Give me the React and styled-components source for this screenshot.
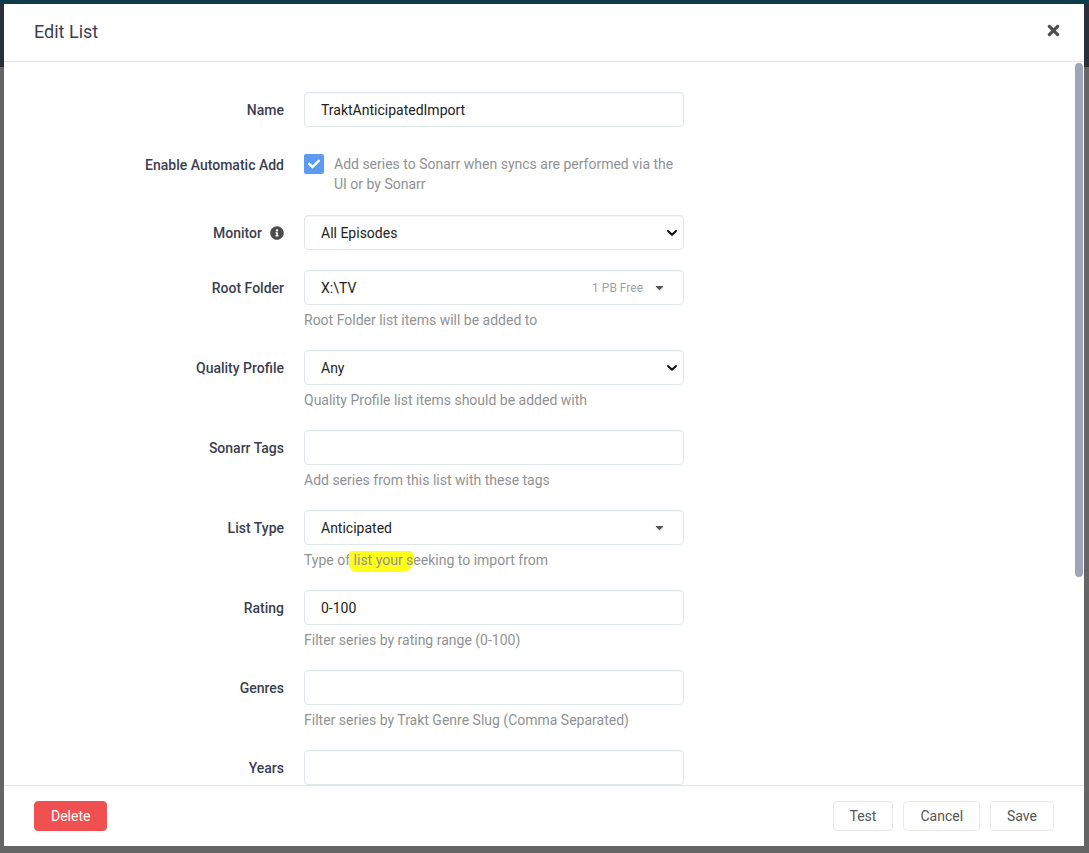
import React from 'react';
import styled, { createGlobalStyle } from 'styled-components';
import { FaTimes, FaInfoCircle, FaCaretDown, FaCheck } from 'react-icons/fa';

const GlobalStyle = createGlobalStyle`
  html, body {
    margin: 0;
    padding: 0;
    height: 100%;
  }
  body {
    font-family: Roboto, "Liberation Sans", sans-serif;
    font-size: 14px;
    color: #515253;
    background: #656565;
  }
  * {
    box-sizing: border-box;
  }
`;

const Page = styled.div`
  height: 100vh;
  background: #656565;
`;

const PageHeader = styled.div`
  height: 67px;
  background: #2a2e38;
  border-top: 4px solid #0e3c48;
`;

const Modal = styled.div`
  position: fixed;
  top: 4px;
  left: 4px;
  width: 1080px;
  height: 842px;
  display: flex;
  flex-direction: column;
  background: #fff;
`;

const ModalHeader = styled.div`
  display: flex;
  align-items: center;
  justify-content: space-between;
  height: 58px;
  padding-left: 30px;
  border-bottom: 1px solid #e5e5e5;
  flex: 0 0 auto;
`;

const Title = styled.h1`
  margin: 0;
  font-size: 18px;
  font-weight: 400;
  color: #3a3f51;
  padding-bottom: 2px;
`;

const CloseButton = styled.button`
  width: 62px;
  height: 57px;
  display: flex;
  align-items: center;
  justify-content: center;
  padding: 0 0 4px 0;
  border: 0;
  background: transparent;
  color: #4d4d4d;
  font-size: 17px;
  cursor: pointer;
`;

const BodyFrame = styled.div`
  position: relative;
  flex: 1 1 auto;
  min-height: 0;
`;

const ModalBody = styled.div`
  height: 100%;
  overflow: hidden;
  padding: 30px;
`;

/* the browser hides real scrollbars in screenshots, so the thumb is drawn over the body */
const ScrollThumb = styled.div`
  position: absolute;
  top: 1px;
  right: 1px;
  width: 8px;
  height: 514px;
  border-radius: 4px;
  background: #9ea4b9;
`;

const FormGroup = styled.div`
  display: flex;
  margin-bottom: 20px;
`;

const Label = styled.label`
  display: flex;
  align-items: center;
  justify-content: flex-end;
  flex: 0 0 250px;
  height: 35px;
  margin-right: 20px;
  font-weight: 500;
  color: #3a3f51;
`;

const InfoIcon = styled.span`
  display: inline-flex;
  margin-left: 8px;
  color: #4b4b4b;
  font-size: 14px;
`;

const InputGroup = styled.div`
  flex: 0 0 380px;
  width: 380px;
`;

const inputBox = `
  display: flex;
  align-items: center;
  width: 100%;
  height: 35px;
  padding: 0 16px;
  border: 1px solid #dde6e9;
  border-radius: 4px;
  background: #fff;
  box-shadow: inset 0 1px 1px rgba(0, 0, 0, 0.035);
  font-family: Roboto, "Liberation Sans", sans-serif;
  font-size: 14px;
  color: #222;
`;

const TextInput = styled.input`
  ${inputBox}
  outline: none;
`;

const SelectBox = styled.div`
  ${inputBox}
  justify-content: space-between;
  padding-right: ${(p) => (p.$enhanced ? '17px' : '5px')};
`;

const Hint = styled.span`
  margin-left: auto;
  margin-right: 10px;
  font-size: 12px;
  color: #a0a3a5;
`;

const Caret = styled.span`
  display: inline-flex;
  color: #555;
  font-size: 13px;
`;

const HelpText = styled.div`
  margin-top: 5px;
  line-height: 20px;
  color: #909293;
`;

const Highlight = styled.span`
  background: #ffff1a;
  margin-left: -5px;
  padding: 1px 0 4px 5px;
  border-radius: 3px 4px 10px 8px;
`;

const CheckRow = styled.div`
  display: flex;
  align-items: flex-start;
  padding: 7px 0 1px;
`;

const CheckBox = styled.span`
  display: flex;
  align-items: center;
  justify-content: center;
  flex: 0 0 20px;
  width: 20px;
  height: 20px;
  margin-right: 10px;
  border-radius: 2px;
  background: #5b9cf0;
  color: #fff;
  font-size: 12px;
`;

const CheckText = styled.span`
  line-height: 20px;
  color: #909293;
`;

const ModalFooter = styled.div`
  display: flex;
  align-items: center;
  justify-content: space-between;
  flex: 0 0 auto;
  height: 61px;
  padding: 0 30px;
  border-top: 1px solid #e5e5e5;
`;

const Actions = styled.div`
  display: flex;
  gap: 10px;
`;

const Button = styled.button`
  height: 30px;
  padding: 0 16px;
  border: 1px solid ${(p) => (p.$danger ? '#f05050' : '#eaeaea')};
  border-radius: 4px;
  background: ${(p) => (p.$danger ? '#f05050' : '#fff')};
  color: ${(p) => (p.$danger ? '#fff' : '#555')};
  font-family: Roboto, "Liberation Sans", sans-serif;
  font-size: 14px;
  cursor: pointer;
`;

const Chevron = () => (
  <svg width="12" height="8" viewBox="0 0 12 8">
    <path d="M2 2 L6 5.8 L10 2" fill="none" stroke="#111" strokeWidth="2" strokeLinecap="round" strokeLinejoin="round" />
  </svg>
);

const Select = ({ value }) => (
  <SelectBox>
    <span>{value}</span>
    <Chevron />
  </SelectBox>
);

const EnhancedSelect = ({ value, hint }) => (
  <SelectBox $enhanced>
    <span>{value}</span>
    {hint && <Hint>{hint}</Hint>}
    <Caret>
      <FaCaretDown />
    </Caret>
  </SelectBox>
);

const Field = ({ label, help, info, children }) => (
  <FormGroup>
    <Label>
      {label}
      {info && (
        <InfoIcon>
          <FaInfoCircle />
        </InfoIcon>
      )}
    </Label>
    <InputGroup>
      {children}
      {help && <HelpText>{help}</HelpText>}
    </InputGroup>
  </FormGroup>
);

export default function App() {
  return (
    <Page>
      <GlobalStyle />
      <PageHeader />
      <Modal>
        <ModalHeader>
          <Title>Edit List</Title>
          <CloseButton aria-label="Close">
            <FaTimes />
          </CloseButton>
        </ModalHeader>

        <BodyFrame>
          <ModalBody>
            <Field label="Name">
              <TextInput value="TraktAnticipatedImport" readOnly />
            </Field>

            <Field label="Enable Automatic Add">
              <CheckRow>
                <CheckBox>
                  <FaCheck />
                </CheckBox>
                <CheckText>Add series to Sonarr when syncs are performed via the UI or by Sonarr</CheckText>
              </CheckRow>
            </Field>

            <Field label="Monitor" info>
              <Select value="All Episodes" />
            </Field>

            <Field label="Root Folder" help="Root Folder list items will be added to">
              <EnhancedSelect value="X:\TV" hint="1 PB Free" />
            </Field>

            <Field label="Quality Profile" help="Quality Profile list items should be added with">
              <Select value="Any" />
            </Field>

            <Field label="Sonarr Tags" help="Add series from this list with these tags">
              <TextInput value="" readOnly />
            </Field>

            <Field
              label="List Type"
              help={
                <>
                  Type of <Highlight>list your s</Highlight>eeking to import from
                </>
              }
            >
              <EnhancedSelect value="Anticipated" />
            </Field>

            <Field label="Rating" help="Filter series by rating range (0-100)">
              <TextInput value="0-100" readOnly />
            </Field>

            <Field label="Genres" help="Filter series by Trakt Genre Slug (Comma Separated)">
              <TextInput value="" readOnly />
            </Field>

            <Field label="Years">
              <TextInput value="" readOnly />
            </Field>
          </ModalBody>
          <ScrollThumb />
        </BodyFrame>

        <ModalFooter>
          <Button $danger>Delete</Button>
          <Actions>
            <Button>Test</Button>
            <Button>Cancel</Button>
            <Button>Save</Button>
          </Actions>
        </ModalFooter>
      </Modal>
    </Page>
  );
}
